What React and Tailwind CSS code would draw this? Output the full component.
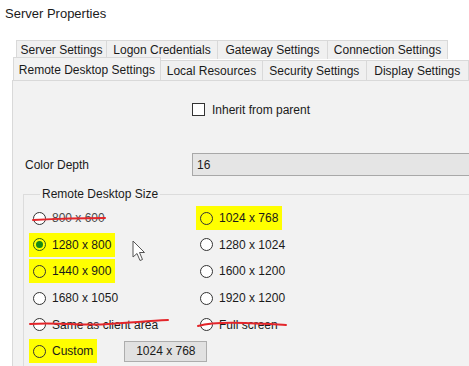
const font = "font-['Liberation_Sans','Arial',sans-serif]";

function Radio({ checked, clear }) {
  return (
    <span
      className={
        "flex h-[13px] w-[13px] shrink-0 items-center justify-center rounded-full border " +
        (checked ? "border-[#2f5a1c]" : "border-[#333333]") +
        (clear ? " bg-transparent" : " bg-white")
      }
    >
      {checked && <span className="h-[7px] w-[7px] rounded-full bg-[#168a16]" />}
    </span>
  );
}

function Option({ label, checked, mark, strike, muted }) {
  const body = (
    <span className="flex items-center gap-[6px]">
      <Radio checked={checked} clear={mark} />
      <span className={muted ? "text-[#4a4a4a]" : "text-[#1a1a1a]"}>{label}</span>
    </span>
  );
  return (
    <div className="relative flex h-[26.6px] items-center">
      {mark ? (
        <span className="-mx-[4px] flex items-center bg-[#ffff00] px-[4px] py-[3px]">{body}</span>
      ) : (
        body
      )}
      {strike}
    </div>
  );
}

function Strike({ className, d, w }) {
  return (
    <svg className={"pointer-events-none absolute " + className} width={w} height="12" viewBox={`0 0 ${w} 12`}>
      <path d={d} fill="none" stroke="#e3262b" strokeWidth="2" strokeLinecap="round" />
    </svg>
  );
}

const row1 = [
  ["Server Settings", "w-[90px]"],
  ["Logon Credentials", "w-[111px]"],
  ["Gateway Settings", "w-[110px]"],
  ["Connection Settings", "w-[121px]"],
];
const row2 = [
  ["Local Resources", "w-[104px]"],
  ["Security Settings", "w-[105px]"],
  ["Display Settings", "w-[104px]"],
];

export default function App() {
  return (
    <div className={"relative h-[366px] w-[469px] overflow-hidden bg-white text-[12px] text-[#1a1a1a] " + font}>
      {/* title */}
      <div className="h-[40px] pl-[5px] pt-[6px] text-[13px] leading-[16px] text-[#1a1a1a]">Server Properties</div>

      {/* tab rows */}
      <div className="ml-[16px] flex h-[19px]">
        {row1.map(([t, w]) => (
          <div
            key={t}
            className={"flex items-center justify-center border border-b-0 border-r-0 border-[#d9d9d9] bg-[#f0f0f0] last:border-r " + w}
          >
            {t}
          </div>
        ))}
      </div>
      <div className="ml-[13px] flex h-[21px] items-end">
        <div className="relative z-10 -mt-[2px] flex h-[23px] w-[150px] items-start justify-center border border-b-0 border-[#d9d9d9] bg-[#f2f2f2] pt-[3px]">
          Remote Desktop Settings
        </div>
        {row2.map(([t, w]) => (
          <div
            key={t}
            className={"flex h-[20px] items-center justify-center border border-b-0 border-l-0 border-[#d9d9d9] bg-[#f0f0f0] " + w}
          >
            {t}
          </div>
        ))}
      </div>

      {/* tab page */}
      <div className="ml-[12px] h-[300px] border-l border-t border-[#d9d9d9] bg-[#f2f2f2]">
        <div className="ml-[179px] mt-[22px] flex h-[13px] items-center gap-[7px]">
          <span className="h-[13px] w-[13px] border border-[#333333] bg-white" />
          <span>Inherit from parent</span>
        </div>

        <div className="mt-[37px] flex h-[23px] items-center">
          <span className="ml-[12px] w-[167px]">Color Depth</span>
          <div className="flex h-[23px] flex-1 items-center border border-r-0 border-[#a8a8a8] bg-[#e5e5e5] pl-[4px]">16</div>
        </div>

        <fieldset className="ml-[10px] mt-[11px] border-l border-t border-[#dcdcdc] pb-[20px] pl-[9px] pt-[4px]">
          <legend className="ml-[7px] px-[2px] leading-[14px]">Remote Desktop Size</legend>
          <div className="grid grid-cols-[167px_1fr]">
            <Option
              label="800 x 600"
              muted
              strike={<Strike className="-left-[1px] top-[8px]" w={74} d="M1 7 C 20 6, 50 5, 73 5" />}
            />
            <Option label="1024 x 768" mark />
            <Option label="1280 x 800" mark checked />
            <Option label="1280 x 1024" />
            <Option label="1440 x 900" mark />
            <Option label="1600 x 1200" />
            <Option label="1680 x 1050" />
            <Option label="1920 x 1200" />
            <Option
              label="Same as client area"
              strike={<Strike className="-left-[4px] top-[5px]" w={140} d="M1 8 C 30 6, 50 10, 80 8 S 120 5, 139 4" />}
            />
            <Option
              label="Full screen"
              strike={<Strike className="-left-[3px] top-[6px]" w={90} d="M1 9 C 20 4, 50 6, 89 8" />}
            />
            <div className="col-span-2 flex h-[26.6px] items-center">
              <span className="-mx-[4px] flex items-center gap-[6px] bg-[#ffff00] px-[4px] py-[3px]">
                <Radio clear />
                <span>Custom</span>
              </span>
              <div className="ml-[31px] flex h-[21px] w-[83px] items-center justify-center border border-[#adadad] bg-[#e1e1e1]">
                1024 x 768
              </div>
            </div>
          </div>
        </fieldset>
      </div>

      {/* mouse cursor */}
      <svg className="pointer-events-none absolute left-[132px] top-[240px]" width="14" height="23" viewBox="0 0 14 23">
        <path
          d="M1 1 L1 17 L5 13.5 L8 20.5 L10.5 19.5 L7.5 12.5 L12.5 12.5 Z"
          fill="#ffffff"
          stroke="#555555"
          strokeWidth="1"
          strokeLinejoin="round"
        />
      </svg>
    </div>
  );
}
